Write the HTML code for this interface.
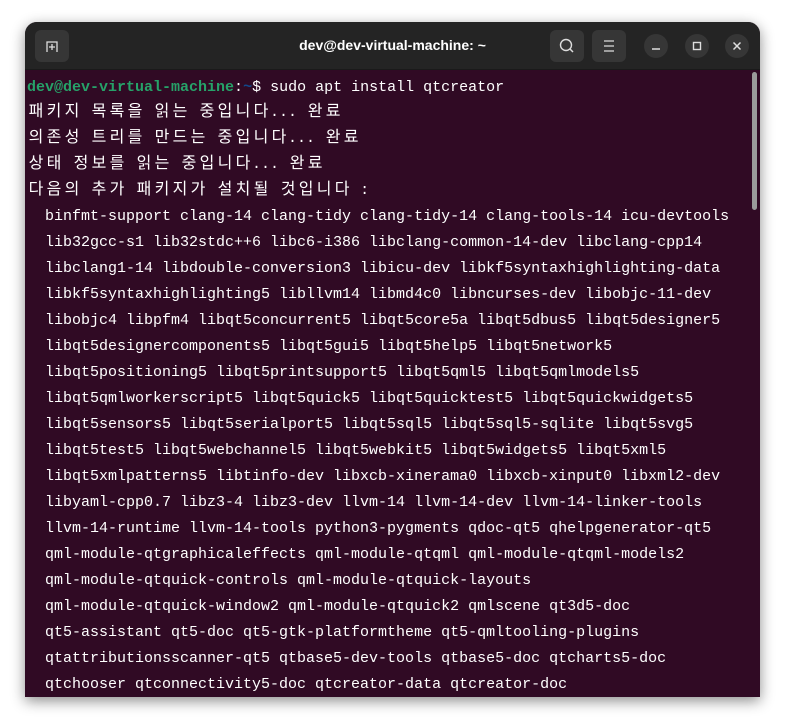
<!DOCTYPE html>
<html><head><meta charset="utf-8"><style>
body{margin:0;width:786px;height:725px;background:#fff;overflow:hidden;position:relative;font-family:"Liberation Sans",sans-serif}
.win{position:absolute;left:25px;top:22px;width:735px;height:675px;border-radius:12px 12px 0 0;overflow:hidden;box-shadow:0 4px 14px rgba(0,0,0,.45);background:#300a24}
.tb{position:absolute;left:0;top:0;width:735px;height:47px;background:#242424;border-bottom:1px solid #1a1a1a}
.btn{position:absolute;top:8px;width:34px;height:32px;border-radius:6px;background:#363636}
.c{position:absolute;top:12px;width:24px;height:24px;border-radius:50%;background:#363636}
.title{position:absolute;left:0;right:0;top:15px;text-align:center;color:#fff;font-weight:bold;font-size:14px}
.term{position:absolute;left:2px;top:54px;font-family:"Liberation Mono",monospace;font-size:15px;color:#fff}
.term div{height:26px;line-height:26px;white-space:pre}
.term div.f{height:24px;line-height:24px}
i{font-style:normal;display:inline-block;width:18px;text-align:center;font-family:"Noto Sans CJK KR",sans-serif;font-size:16px;line-height:16px;vertical-align:baseline}
.sb{position:absolute;left:727px;top:50px;width:5px;height:138px;background:#9a9a9a;border-radius:3px}
</style></head><body>
<div class="win">
<div class="tb">
<div class="btn" style="left:10px"><svg width="34" height="32"><path d="M12 22 L12 12 L22 12 L22 22 M17 14 V20 M14 17 H20" stroke="#ddd" stroke-width="1.3" fill="none"/></svg></div>
<div class="title">dev@dev-virtual-machine: ~</div>
<div class="btn" style="left:525px"><svg width="34" height="32"><circle cx="16" cy="15" r="5.5" stroke="#ddd" stroke-width="1.4" fill="none"/><path d="M20 19 L23 22" stroke="#ddd" stroke-width="1.5"/></svg></div>
<div class="btn" style="left:567px"><svg width="34" height="32"><path d="M12 11H22M12 16H22M12 21H22" stroke="#ddd" stroke-width="1.3"/></svg></div>
<div class="c" style="left:619px"><svg width="24" height="24"><path d="M8 15H16" stroke="#ddd" stroke-width="1.5"/></svg></div>
<div class="c" style="left:660px"><svg width="24" height="24"><rect x="8.5" y="8.5" width="7" height="7" stroke="#ddd" stroke-width="1.4" fill="none"/></svg></div>
<div class="c" style="left:700px"><svg width="24" height="24"><path d="M8.5 8.5L15.5 15.5M15.5 8.5L8.5 15.5" stroke="#ddd" stroke-width="1.5"/></svg></div>
</div>
<div class="sb"></div>
<div class="term"><div class="f"><span style="color:#26a269;font-weight:bold">dev@dev-virtual-machine</span>:<span style="color:#12488b;font-weight:bold">~</span>$ sudo apt install qtcreator</div><div><i>패</i><i>키</i><i>지</i> <i>목</i><i>록</i><i>을</i> <i>읽</i><i>는</i> <i>중</i><i>입</i><i>니</i><i>다</i>... <i>완</i><i>료</i></div><div><i>의</i><i>존</i><i>성</i> <i>트</i><i>리</i><i>를</i> <i>만</i><i>드</i><i>는</i> <i>중</i><i>입</i><i>니</i><i>다</i>... <i>완</i><i>료</i></div><div><i>상</i><i>태</i> <i>정</i><i>보</i><i>를</i> <i>읽</i><i>는</i> <i>중</i><i>입</i><i>니</i><i>다</i>... <i>완</i><i>료</i></div><div><i>다</i><i>음</i><i>의</i> <i>추</i><i>가</i> <i>패</i><i>키</i><i>지</i><i>가</i> <i>설</i><i>치</i><i>될</i> <i>것</i><i>입</i><i>니</i><i>다</i> :</div><div>  binfmt-support clang-14 clang-tidy clang-tidy-14 clang-tools-14 icu-devtools</div><div>  lib32gcc-s1 lib32stdc++6 libc6-i386 libclang-common-14-dev libclang-cpp14</div><div>  libclang1-14 libdouble-conversion3 libicu-dev libkf5syntaxhighlighting-data</div><div>  libkf5syntaxhighlighting5 libllvm14 libmd4c0 libncurses-dev libobjc-11-dev</div><div>  libobjc4 libpfm4 libqt5concurrent5 libqt5core5a libqt5dbus5 libqt5designer5</div><div>  libqt5designercomponents5 libqt5gui5 libqt5help5 libqt5network5</div><div>  libqt5positioning5 libqt5printsupport5 libqt5qml5 libqt5qmlmodels5</div><div>  libqt5qmlworkerscript5 libqt5quick5 libqt5quicktest5 libqt5quickwidgets5</div><div>  libqt5sensors5 libqt5serialport5 libqt5sql5 libqt5sql5-sqlite libqt5svg5</div><div>  libqt5test5 libqt5webchannel5 libqt5webkit5 libqt5widgets5 libqt5xml5</div><div>  libqt5xmlpatterns5 libtinfo-dev libxcb-xinerama0 libxcb-xinput0 libxml2-dev</div><div>  libyaml-cpp0.7 libz3-4 libz3-dev llvm-14 llvm-14-dev llvm-14-linker-tools</div><div>  llvm-14-runtime llvm-14-tools python3-pygments qdoc-qt5 qhelpgenerator-qt5</div><div>  qml-module-qtgraphicaleffects qml-module-qtqml qml-module-qtqml-models2</div><div>  qml-module-qtquick-controls qml-module-qtquick-layouts</div><div>  qml-module-qtquick-window2 qml-module-qtquick2 qmlscene qt3d5-doc</div><div>  qt5-assistant qt5-doc qt5-gtk-platformtheme qt5-qmltooling-plugins</div><div>  qtattributionsscanner-qt5 qtbase5-dev-tools qtbase5-doc qtcharts5-doc</div><div>  qtchooser qtconnectivity5-doc qtcreator-data qtcreator-doc</div></div>
</div>
</body></html>
